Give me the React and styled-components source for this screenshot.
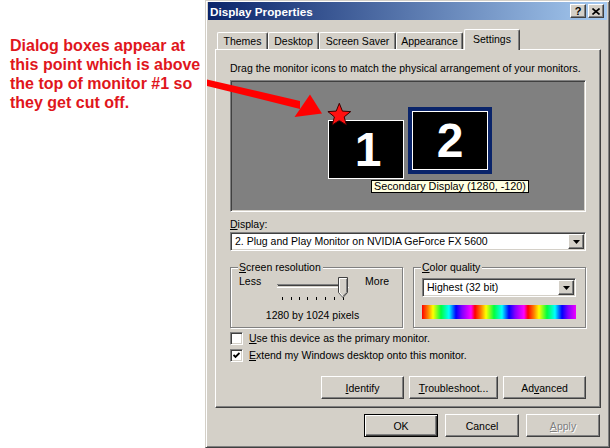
import React from "react"
import styled, { createGlobalStyle, css } from "styled-components"

const GlobalStyle = createGlobalStyle`
  html, body {
    margin: 0;
    padding: 0;
    background: #fff;
  }
  body {
    font-family: "Liberation Sans", Arial, sans-serif;
    font-size: 10.5px;
    color: #000;
  }
`

const raised = css`
  border: 1px solid;
  border-color: #fff #404040 #404040 #fff;
  box-shadow: inset -1px -1px #808080;
`

const sunken = css`
  border: 1px solid;
  border-color: #808080 #fff #fff #808080;
  box-shadow: inset 1px 1px #404040, inset -1px -1px #d4d0c8;
`

const Page = styled.div`
  position: relative;
  width: 610px;
  height: 448px;
  display: flex;
  overflow: hidden;
  background: #fff;
`

const Note = styled.p`
  width: 205px;
  flex: none;
  margin: 0;
  padding: 36px 0 0 10px;
  box-sizing: border-box;
  font: bold 16px/19px "Liberation Sans", Arial, sans-serif;
  color: #e0161c;
  white-space: nowrap;
`

const Dialog = styled.div`
  flex: 1;
  height: 448px;
  box-sizing: border-box;
  background: #d4d0c8;
  border: 1px solid;
  border-color: #d4d0c8 #404040 #404040 #d4d0c8;
  box-shadow: inset 1px 1px #fff, inset -1px -1px #808080;
  padding: 1px 2px 2px 2px;
  display: flex;
  flex-direction: column;
`

const TitleBar = styled.div`
  height: 18px;
  flex: none;
  display: flex;
  align-items: center;
  padding: 0 3px 0 2px;
  background: linear-gradient(to right, #0a246a, #a6caf0);
`

const Title = styled.span`
  flex: 1;
  color: #fff;
  font: bold 11.7px "Liberation Sans", Arial, sans-serif;
`

const Caption = styled.button`
  ${raised};
  width: 16px;
  height: 14px;
  margin-left: ${p => p.$gap || 0}px;
  padding: 0;
  box-sizing: border-box;
  background: #d4d0c8;
  display: flex;
  align-items: center;
  justify-content: center;
  font: bold 11px/1 "Liberation Sans", Arial, sans-serif;
  color: #000;
`

const Body = styled.div`
  flex: 1;
  display: flex;
  flex-direction: column;
  padding: 9px 6px 0 7px;
`

const TabStrip = styled.div`
  display: flex;
  align-items: flex-end;
  height: 20px;
  padding-left: 2px;
`

const Tab = styled.div`
  position: relative;
  box-sizing: border-box;
  width: ${p => p.$w}px;
  height: ${p => (p.$on ? 21 : 17)}px;
  margin-left: ${p => (p.$on ? 1 : 0)}px;
  margin-bottom: ${p => (p.$on ? -1 : 0)}px;
  padding-bottom: ${p => (p.$on ? 3 : 0)}px;
  z-index: ${p => (p.$on ? 2 : 0)};
  background: #d4d0c8;
  border-left: 1px solid #fff;
  border-top: 1px solid #fff;
  border-right: 1px solid #404040;
  border-radius: 2px 2px 0 0;
  box-shadow: inset -1px 0 #808080;
  display: flex;
  align-items: center;
  justify-content: center;
`

const Panel = styled.div`
  ${raised};
  position: relative;
  z-index: 1;
  padding: 12px 14px 8px 14px;
  display: flex;
  flex-direction: column;
`

const Hint = styled.div`
  line-height: 13px;
  white-space: nowrap;
`

const Canvas = styled.div`
  position: relative;
  margin-top: 5px;
  height: 132px;
  box-sizing: border-box;
  background: #808080;
  border: 1px solid;
  border-color: #808080 #fff #fff #808080;
  box-shadow: inset 1px 1px #404040, inset -1px -1px #d4d0c8;
`

const Monitor = styled.div`
  position: absolute;
  left: ${p => p.$x}px;
  top: ${p => p.$y}px;
  width: 76px;
  height: 59px;
  box-sizing: border-box;
  background: #000;
  border: 1px solid #fff;
  outline: ${p => (p.$active ? "4px solid #0a246a" : "none")};
  display: flex;
  align-items: center;
  justify-content: center;
  padding-left: ${p => p.$nudge || 0}px;
  color: #fff;
  font: bold 48px/1 "Liberation Sans", Arial, sans-serif;
`

const Tooltip = styled.div`
  position: absolute;
  left: 140px;
  top: 99px;
  height: 13px;
  box-sizing: border-box;
  padding: 0 2px;
  background: #ffffe1;
  border: 1px solid #000;
  line-height: 11px;
  font-size: 10.8px;
  white-space: nowrap;
`

const Label = styled.div`
  margin-top: 6px;
  line-height: 13px;
`

const Select = styled.div`
  ${sunken};
  height: 19px;
  margin-top: ${p => p.$top || 0}px;
  box-sizing: border-box;
  padding: 1px;
  background: #fff;
  display: flex;
  align-items: stretch;
`

const SelectText = styled.span`
  flex: 1;
  padding-left: 3px;
  line-height: 15px;
  white-space: nowrap;
  overflow: hidden;
`

const DropButton = styled.span`
  ${raised};
  width: 16px;
  box-sizing: border-box;
  background: #d4d0c8;
  display: flex;
  align-items: center;
  justify-content: center;
`

const Groups = styled.div`
  display: grid;
  grid-template-columns: 1fr 1fr;
  gap: 10px;
  margin-top: 16px;
`

const Group = styled.div`
  position: relative;
  box-sizing: border-box;
  height: 61px;
  border: 1px solid #808080;
  box-shadow: inset 1px 1px #fff, 1px 1px #fff;
  padding: ${p => p.$pad};
  display: flex;
  flex-direction: column;
`

const GroupLabel = styled.span`
  position: absolute;
  left: 7px;
  top: -7px;
  padding: 0 2px 0 1px;
  line-height: 13px;
  background: #d4d0c8;
`

const SliderRow = styled.div`
  display: grid;
  grid-template-columns: 36px 76px 1fr;
  height: 26px;
  line-height: 13px;
`

const More = styled.span`
  justify-self: end;
`

const Caption2 = styled.div`
  margin-top: 8px;
  line-height: 13px;
  text-align: center;
  padding-right: 3px;
`

const ColorBar = styled.div`
  margin-top: 8px;
  height: 14px;
  background: repeating-linear-gradient(
    to right,
    #ff0000 0px,
    #ff8000 6px,
    #ffff00 11px,
    #00ff40 19px,
    #00ffff 27px,
    #0000ff 34px,
    #8000ff 40px,
    #ff00ff 49px,
    #ff0000 53px
  );
`

const CheckList = styled.div`
  display: flex;
  flex-direction: column;
  gap: 4px;
  margin-top: 4px;
`

const CheckRow = styled.label`
  display: flex;
  align-items: center;
  gap: 6px;
  height: 13px;
  line-height: 13px;
`

const Box = styled.span`
  ${sunken};
  width: 13px;
  height: 13px;
  box-sizing: border-box;
  background: #fff;
  display: flex;
  align-items: center;
  justify-content: center;
`

const ButtonRow = styled.div`
  display: flex;
  justify-content: flex-end;
  gap: ${p => p.$gap}px;
  margin-top: ${p => p.$top}px;
  padding-right: ${p => p.$right || 0}px;
`

const Button = styled.button`
  ${raised};
  width: ${p => p.$w}px;
  height: 23px;
  padding: 0;
  box-sizing: border-box;
  background: #d4d0c8;
  font: 10.5px "Liberation Sans", Arial, sans-serif;
  color: ${p => (p.disabled ? "#808080" : "#000")};
  text-shadow: ${p => (p.disabled ? "1px 1px #fff" : "none")};
  ${p =>
    p.$default &&
    css`
      border: 1px solid #000;
      box-shadow: inset 1px 1px #fff, inset -1px -1px #404040, inset -2px -2px #808080;
    `}
`

const Footer = styled.div`
  display: flex;
  justify-content: flex-end;
  gap: 7px;
  padding: 6px 1px 0 0;
`

const Overlay = styled.svg`
  position: absolute;
  left: 0;
  top: 0;
  z-index: 10;
  pointer-events: none;
`

const tabs = [
  ["Themes", 51],
  ["Desktop", 51],
  ["Screen Saver", 77],
  ["Appearance", 67],
  ["Settings", 56, true],
]

const ticks = [7, 16, 24, 32, 41, 50, 59, 68]

const Slider = () => (
  <svg width="76" height="26" viewBox="0 0 76 26">
    <rect x="2" y="9" width="71" height="1" fill="#808080" />
    <rect x="3" y="10" width="69" height="1" fill="#404040" />
    <rect x="3" y="11" width="69" height="1" fill="#d4d0c8" />
    <rect x="2" y="12" width="72" height="1" fill="#fff" />
    {ticks.map(t => (
      <rect key={t} x={t} y="22" width="1" height="3" fill="#000" />
    ))}
    <polygon points="63.5,2.5 72.5,2.5 72.5,17.5 68,22.5 63.5,17.5" fill="#d4d0c8" stroke="#404040" />
    <polyline points="68,21.5 64.5,17.5 64.5,3.5 71.5,3.5" fill="none" stroke="#fff" />
    <polyline points="71.5,4 71.5,17.3 68,21" fill="none" stroke="#808080" />
  </svg>
)

const Arrow = () => (
  <svg width="7" height="4" viewBox="0 0 7 4">
    <polygon points="0,0 7,0 3.5,4" fill="#000" />
  </svg>
)

const Check = () => (
  <svg width="7" height="7" viewBox="0 0 7 7">
    <polyline points="0.5,3 2.5,5 6.5,1" fill="none" stroke="#000" strokeWidth="1.8" />
  </svg>
)

export default function App() {
  return (
    <Page>
      <GlobalStyle />
      <Note>
        Dialog boxes appear at
        <br />
        this point which is above
        <br />
        the top of monitor #1 so
        <br />
        they get cut off.
      </Note>

      <Dialog>
        <TitleBar>
          <Title>Display Properties</Title>
          <Caption>?</Caption>
          <Caption $gap={2}>
            <svg width="8" height="7" viewBox="0 0 8 7">
              <path d="M0.5 0.5 L7.5 6.5 M7.5 0.5 L0.5 6.5" stroke="#000" strokeWidth="1.6" />
            </svg>
          </Caption>
        </TitleBar>

        <Body>
          <TabStrip>
            {tabs.map(([name, w, on]) => (
              <Tab key={name} $w={w} $on={on}>
                {name}
              </Tab>
            ))}
          </TabStrip>

          <Panel>
            <Hint>Drag the monitor icons to match the physical arrangement of your monitors.</Hint>
            <Canvas>
              <Monitor $x={97} $y={39} $nudge={4}>1</Monitor>
              <Monitor $x={181} $y={30} $active>2</Monitor>
              <Tooltip>Secondary Display (1280, -120)</Tooltip>
            </Canvas>

            <Label>
              <u>D</u>isplay:
            </Label>
            <Select $top={1}>
              <SelectText>2. Plug and Play Monitor on NVIDIA GeForce FX 5600</SelectText>
              <DropButton>
                <Arrow />
              </DropButton>
            </Select>

            <Groups>
              <Group $pad="7px 13px 0 8px">
                <GroupLabel>
                  <u>S</u>creen resolution
                </GroupLabel>
                <SliderRow>
                  <span>Less</span>
                  <Slider />
                  <More>More</More>
                </SliderRow>
                <Caption2>1280 by 1024 pixels</Caption2>
              </Group>
              <Group $pad="10px 9px 0 8px">
                <GroupLabel>
                  <u>C</u>olor quality
                </GroupLabel>
                <Select>
                  <SelectText>Highest (32 bit)</SelectText>
                  <DropButton>
                    <Arrow />
                  </DropButton>
                </Select>
                <ColorBar />
              </Group>
            </Groups>

            <CheckList>
              <CheckRow>
                <Box />
                <span>
                  <u>U</u>se this device as the primary monitor.
                </span>
              </CheckRow>
              <CheckRow>
                <Box>
                  <Check />
                </Box>
                <span>
                  <u>E</u>xtend my Windows desktop onto this monitor.
                </span>
              </CheckRow>
            </CheckList>

            <ButtonRow $gap={5} $top={14}>
              <Button $w={83}>
                <u>I</u>dentify
              </Button>
              <Button $w={89}>
                <u>T</u>roubleshoot...
              </Button>
              <Button $w={83}>
                Ad<u>v</u>anced
              </Button>
            </ButtonRow>
          </Panel>

          <Footer>
            <Button $w={74} $default>
              OK
            </Button>
            <Button $w={74}>Cancel</Button>
            <Button $w={74} disabled>
              <u>A</u>pply
            </Button>
          </Footer>
        </Body>
      </Dialog>

      <Overlay width="610" height="448" viewBox="0 0 610 448">
        <polygon points="207,79.5 300,101 300,109 207,86" fill="#ff0000" />
        <polygon points="310,94.5 322,113.5 294.5,117" fill="#ff0000" />
        <polygon
          points="339.3,103.3 342.4,111.1 350.7,111.6 344.2,116.9 346.4,125 339.3,120.5 332.2,125 334.4,116.9 327.9,111.6 336.2,111.1"
          fill="#ff1010"
          stroke="#3a0000"
          strokeWidth="1"
        />
      </Overlay>
    </Page>
  )
}
